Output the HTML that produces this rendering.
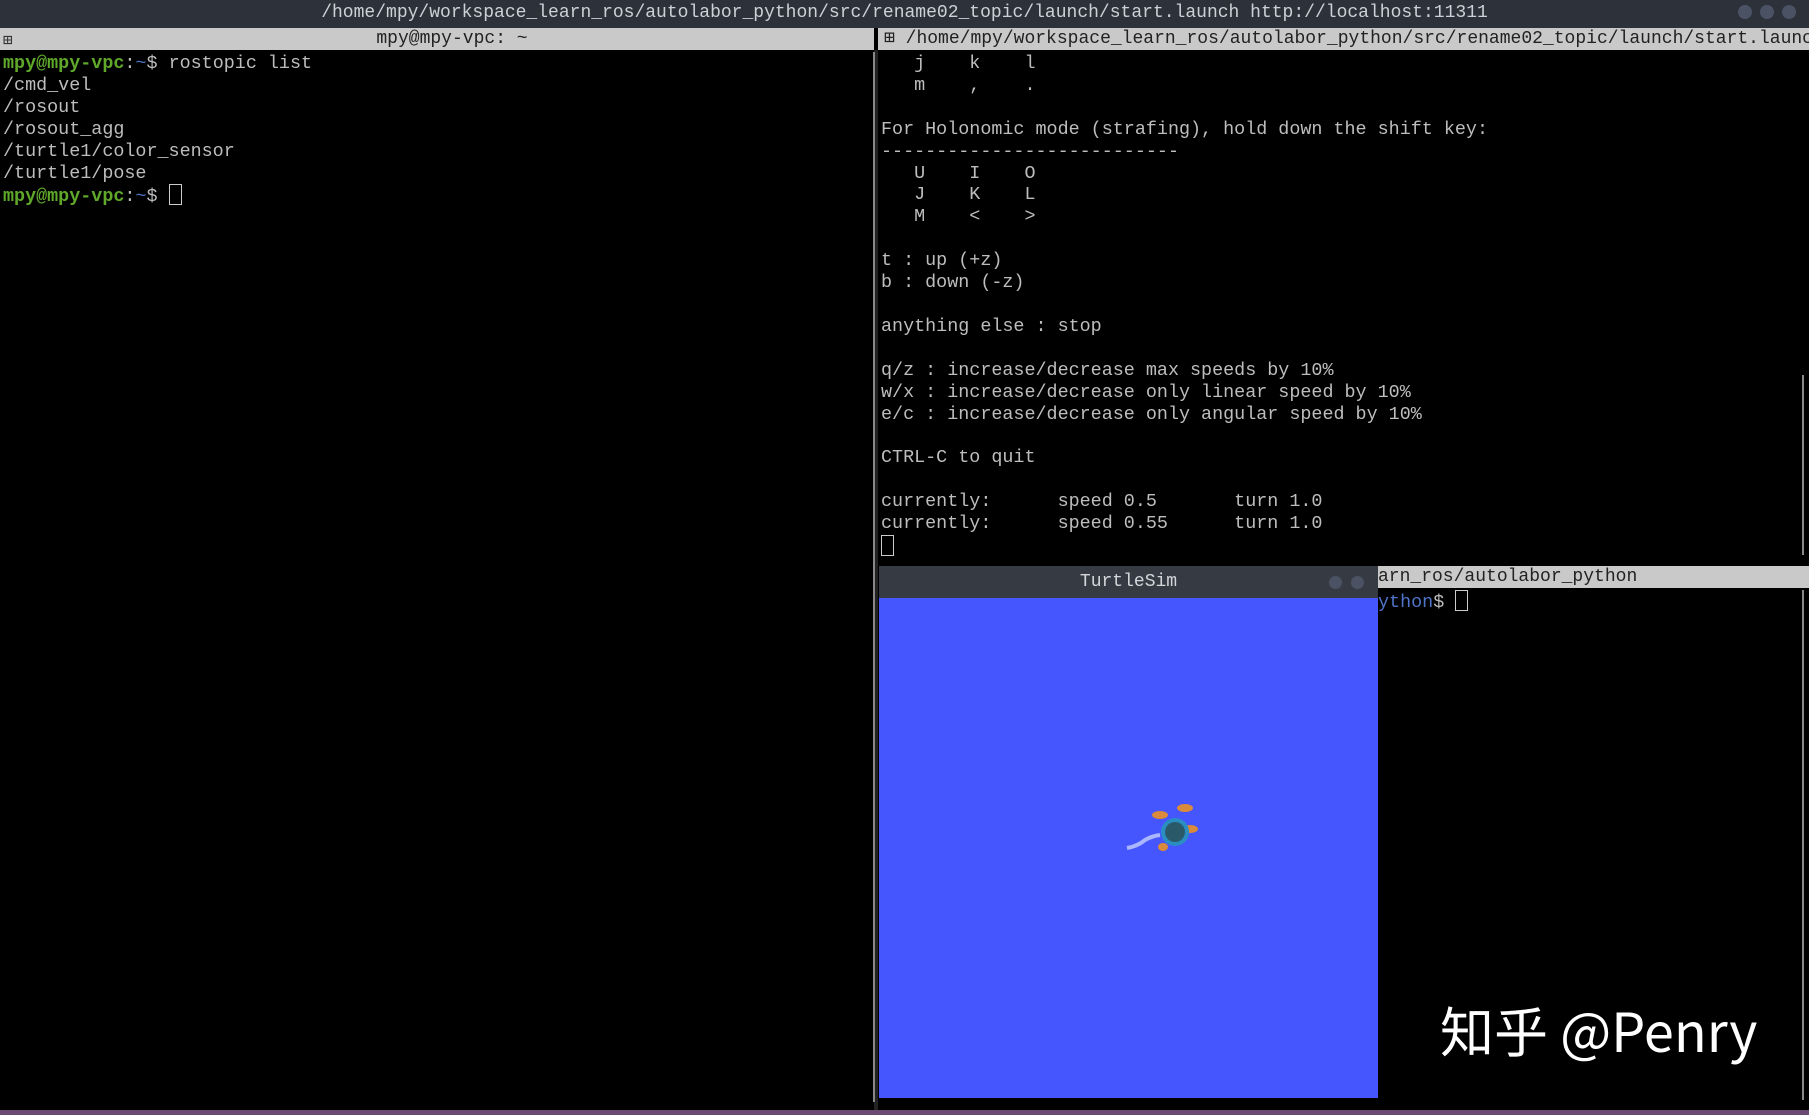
<!DOCTYPE html>
<html><head><meta charset="utf-8"><style>
*{margin:0;padding:0;box-sizing:border-box}
body{width:1809px;height:1115px;background:#000;overflow:hidden;position:relative;font-family:"Liberation Mono",monospace;color:#c8c8c8}
.abs{position:absolute}
pre{font-family:"Liberation Mono",monospace;font-size:18.4px;line-height:21.9px;white-space:pre;position:absolute;color:#bdbdbd}
.g{color:#5fa82a;font-weight:bold}.b{color:#4f73c8}
.cur{display:inline-block;width:13px;height:21px;border:1.5px solid #ccc;vertical-align:-4px}
.bar{background:#c9c9c9;color:#222;font-size:18px;line-height:22px;height:22px;white-space:pre;overflow:hidden}
</style></head><body>
<div class="abs" style="left:0;top:0;width:1809px;height:28px;background:#2d313a;color:#cdd0d6;font-size:18px;line-height:26px;text-align:center">/home/mpy/workspace_learn_ros/autolabor_python/src/rename02_topic/launch/start.launch http://localhost:11311</div>
<div class="abs" style="left:1738px;top:5px;width:14px;height:14px;border-radius:50%;background:#4b5263"></div>
<div class="abs" style="left:1760px;top:5px;width:14px;height:14px;border-radius:50%;background:#4b5263"></div>
<div class="abs" style="left:1782px;top:5px;width:14px;height:14px;border-radius:50%;background:#4b5263"></div>

<div class="abs bar" style="left:0;top:28px;width:874px;padding-left:30px;text-align:center">mpy@mpy-vpc: ~</div>
<div class="abs" style="left:3px;top:30px;font-size:16px;color:#333">⊞</div>
<div class="abs bar" style="left:878px;top:28px;width:931px;padding-left:6px">⊞ /home/mpy/workspace_learn_ros/autolabor_python/src/rename02_topic/launch/start.launch</div>

<div class="abs" style="left:874px;top:50px;width:4px;height:1065px;background:#222"></div>
<div class="abs" style="left:873px;top:52px;width:2px;height:1050px;background:#888"></div>
<div class="abs" style="left:1802px;top:375px;width:2px;height:180px;background:#888"></div>
<div class="abs" style="left:1802px;top:590px;width:2px;height:510px;background:#888"></div>

<pre style="left:3px;top:53px"><span class="g">mpy@mpy-vpc</span>:<span class="b">~</span>$ rostopic list
/cmd_vel
/rosout
/rosout_agg
/turtle1/color_sensor
/turtle1/pose
<span class="g">mpy@mpy-vpc</span>:<span class="b">~</span>$ <span class="cur"></span></pre>

<pre style="left:881px;top:53px">   j    k    l
   m    ,    .

For Holonomic mode (strafing), hold down the shift key:
---------------------------
   U    I    O
   J    K    L
   M    &lt;    &gt;

t : up (+z)
b : down (-z)

anything else : stop

q/z : increase/decrease max speeds by 10%
w/x : increase/decrease only linear speed by 10%
e/c : increase/decrease only angular speed by 10%

CTRL-C to quit

currently:      speed 0.5       turn 1.0
currently:      speed 0.55      turn 1.0
<span class="cur"></span></pre>

<div class="abs bar" style="left:879px;top:566px;width:930px;padding-left:499px">arn_ros/autolabor_python</div>
<pre style="left:1378px;top:590px"><span class="b">ython</span>$ <span class="cur"></span></pre>

<div class="abs" style="left:879px;top:566px;width:499px;height:32px;background:#363a42;color:#d4d6da;font-size:18px;line-height:32px;text-align:center">TurtleSim</div>
<div class="abs" style="left:1329px;top:576px;width:13px;height:13px;border-radius:50%;background:#4b5263"></div>
<div class="abs" style="left:1351px;top:576px;width:13px;height:13px;border-radius:50%;background:#4b5263"></div>
<div class="abs" style="left:879px;top:598px;width:499px;height:500px;background:#4556ff"></div>
<svg class="abs" style="left:1100px;top:780px" width="150" height="100">
<path d="M27 68 Q38 66 45 60 Q52 56 60 55" stroke="#aab6ff" stroke-width="4" fill="none"/>
<ellipse cx="60" cy="35" rx="8" ry="4" fill="#d98a3a"/><ellipse cx="90" cy="49" rx="8" ry="4" fill="#d98a3a"/>
<ellipse cx="63" cy="67" rx="5" ry="4" fill="#d98a3a"/><ellipse cx="85" cy="28" rx="8" ry="4" fill="#d98a3a"/>
<circle cx="75" cy="52" r="14" fill="#2a8fc0"/><circle cx="75" cy="52" r="10" fill="#2a5a6a"/>
</svg>

<div class="abs" style="left:1440px;top:994px;font-family:'Noto Sans CJK SC',sans-serif;font-size:54px;color:#fff;white-space:nowrap;line-height:70px">知乎 @Penry</div>
<div class="abs" style="left:0;top:1110px;width:1809px;height:5px;background:#6a4a70"></div>
</body></html>
